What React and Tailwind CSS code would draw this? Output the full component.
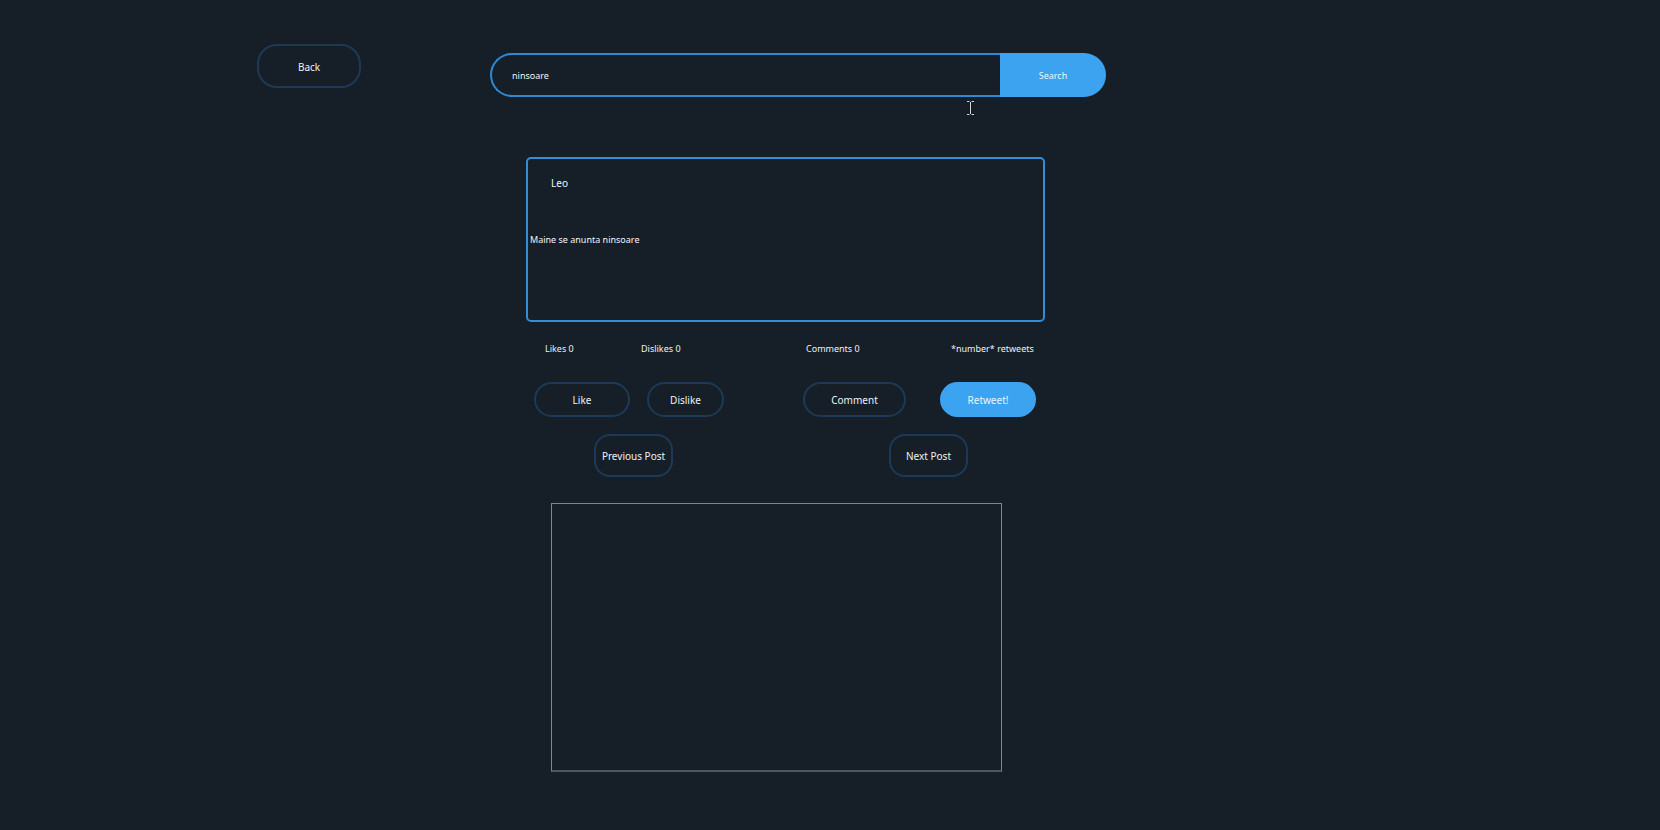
import React from "react";

const font = { fontFamily: '"Noto Sans", "Open Sans", sans-serif' };

function OutlineButton({ className = "", children }) {
  return (
    <div
      className={`flex items-center justify-center pt-[2px] border-2 border-[#1c3a57] text-[10px] text-[#eef2f5] ${className}`}
    >
      {children}
    </div>
  );
}

export default function App() {
  return (
    <div
      className="relative w-full h-[830px] bg-[#161f28] overflow-hidden pt-[44px]"
      style={font}
    >
      {/* Top row */}
      <div className="flex items-start pl-[257px] h-[53px]">
        <OutlineButton className="w-[104px] h-[44px] rounded-[20px]">Back</OutlineButton>
        <div className="flex ml-[129px] mt-[9px] h-[44px]">
          <div className="w-[510px] h-full flex items-center pt-[2px] border-2 border-r-0 border-[#2f8ad6] rounded-l-full pl-[20px] text-[9px] text-[#f0f3f5]">
            ninsoare
          </div>
          <div className="w-[106px] h-full flex items-center justify-center pt-[2px] bg-[#3ba3f0] rounded-r-full text-[9px] text-[#eaf5fd]">
            Search
          </div>
        </div>
      </div>

      {/* Post card */}
      <div className="ml-[526px] mt-[60px] w-[519px] h-[165px] border-2 border-[#338ed8] rounded-[5px] pt-[17px]">
        <div className="pl-[23px] h-[14px] leading-[14px] text-[10px] text-[#f4f6f8]">Leo</div>
        <div className="ml-[2px] mt-[43px] h-[14px] leading-[14px] text-[9px] text-[#f4f6f8]">
          Maine se anunta ninsoare
        </div>
      </div>

      {/* Stats row */}
      <div className="flex mt-[20px] h-[14px] leading-[14px] pl-[545px] text-[9px] text-[#eef2f5]">
        <div className="w-[96px]">Likes 0</div>
        <div className="w-[165px]">Dislikes 0</div>
        <div className="w-[145px]">Comments 0</div>
        <div>*number* retweets</div>
      </div>

      {/* Action buttons */}
      <div className="flex mt-[26px] h-[35px] pl-[534px]">
        <OutlineButton className="w-[96px] h-[35px] rounded-full">Like</OutlineButton>
        <OutlineButton className="ml-[17px] w-[77px] h-[35px] rounded-full">Dislike</OutlineButton>
        <OutlineButton className="ml-[79px] w-[103px] h-[35px] rounded-full">Comment</OutlineButton>
        <div className="ml-[34px] w-[96px] h-[35px] pt-[2px] rounded-full bg-[#3ba3f0] flex items-center justify-center text-[10px] text-[#eaf5fd]">
          Retweet!
        </div>
      </div>

      {/* Navigation */}
      <div className="flex mt-[17px] h-[43px] pl-[594px]">
        <OutlineButton className="w-[79px] h-[43px] rounded-[16px]">Previous Post</OutlineButton>
        <OutlineButton className="ml-[216px] w-[79px] h-[43px] rounded-[16px]">Next Post</OutlineButton>
      </div>

      {/* Empty box */}
      <div className="ml-[551px] mt-[26px] w-[451px] h-[269px] border border-[#7f878e] border-b-2 border-b-[#4d565e]" />

      {/* Mouse cursor (I-beam) */}
      <svg
        className="absolute left-[966px] top-[100px]"
        width="9"
        height="16"
        viewBox="0 0 9 16"
      >
        <path
          d="M1 1.5h2.5M5.5 1.5H8M4.5 2v12M1 14.5h2.5M5.5 14.5H8"
          stroke="#1a1a1a"
          strokeWidth="2.2"
          fill="none"
        />
        <path
          d="M1 1.5h2.5M5.5 1.5H8M4.5 2v12M1 14.5h2.5M5.5 14.5H8"
          stroke="#d8d8d8"
          strokeWidth="1"
          fill="none"
        />
      </svg>
    </div>
  );
}
